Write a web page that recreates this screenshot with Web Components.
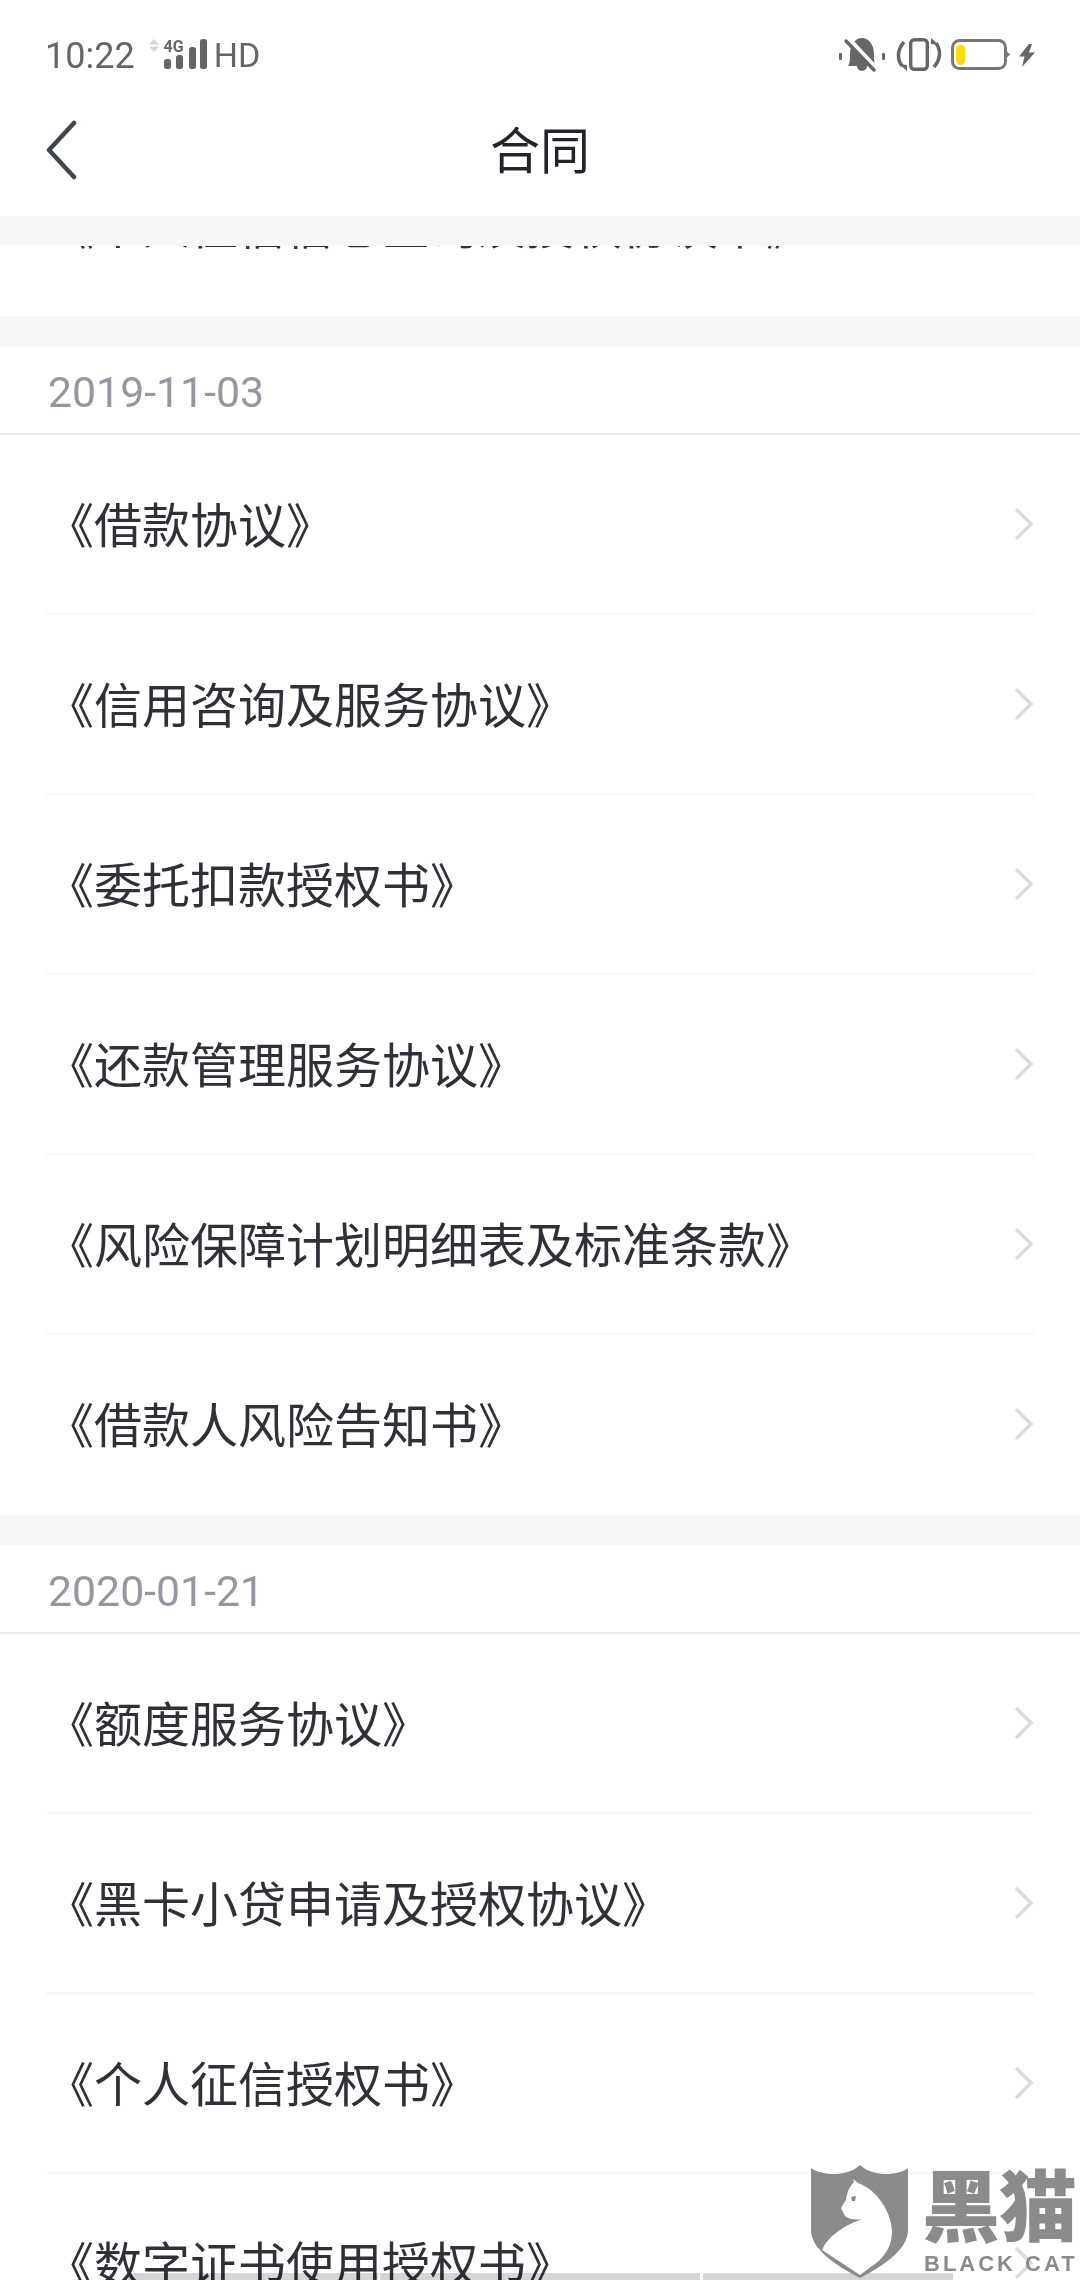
<!DOCTYPE html>
<html>
<head>
<meta charset="utf-8">
<style>
  html, body { margin: 0; padding: 0; background: #fff; }
  body { width: 1080px; height: 2280px; overflow: hidden; position: relative; }
</style>
</head>
<body>
<status-bar></status-bar>
<nav-header title="合同"></nav-header>
<contract-scroll>
  <contract-stub>《个人征信信息查询及授权协议书》</contract-stub>
  <contract-group date="2019-11-03">
    <contract-row>《借款协议》</contract-row>
    <contract-row>《信用咨询及服务协议》</contract-row>
    <contract-row>《委托扣款授权书》</contract-row>
    <contract-row>《还款管理服务协议》</contract-row>
    <contract-row>《风险保障计划明细表及标准条款》</contract-row>
    <contract-row>《借款人风险告知书》</contract-row>
  </contract-group>
  <contract-group date="2020-01-21">
    <contract-row>《额度服务协议》</contract-row>
    <contract-row>《黑卡小贷申请及授权协议》</contract-row>
    <contract-row>《个人征信授权书》</contract-row>
    <contract-row>《数字证书使用授权书》</contract-row>
  </contract-group>
</contract-scroll>
<bottom-strip></bottom-strip>
<cat-mark></cat-mark>
<script>
const SANS = `Roboto, "Noto Sans CJK SC", sans-serif`;
const CJK = `"Noto Sans CJK SC", sans-serif`;

class StatusBar extends HTMLElement {
  constructor() {
    super();
    this.attachShadow({ mode: "open" });
    this.shadowRoot.innerHTML = `
      <style>
        :host{display:flex;align-items:center;justify-content:space-between;height:108px;padding:0 45px;box-sizing:border-box;font-family:${SANS};color:#666}
        .left,.right{display:flex;align-items:center}
        .time{font-size:36px;line-height:40px;padding-top:4px}
        .hd{font-size:34px;line-height:40px;margin-left:7px;padding-top:2px}
        svg{display:block;overflow:visible}
      </style>
      <div class="left">
        <span class="time">10:22</span>
        <svg width="58" height="30" viewBox="0 0 58 30" style="margin-left:14px">
          <path d="M5 0l5 5.500H0zM5 13l5-5.500H0z" fill="#d6d6d6"/>
          <rect x="15" y="20" width="7" height="10" rx="2.500" fill="#666"/>
          <rect x="27" y="16" width="7" height="14" rx="2.500" fill="#666"/>
          <rect x="40" y="8" width="7" height="22" rx="2.500" fill="#666"/>
          <rect x="51" y="0" width="7" height="30" rx="2.500" fill="#666"/>
          <text x="14.500" y="12.500" font-family="Roboto" font-weight="700" font-size="16" fill="#666">4G</text>
        </svg>
        <span class="hd">HD</span>
      </div>
      <div class="right">
        <svg width="46" height="33" viewBox="0 0 46 33">
          <rect x="0" y="15" width="3" height="7" rx="1" fill="#666"/>
          <rect x="43" y="15" width="3" height="7" rx="1" fill="#666"/>
          <path d="M9 28c2-3 2-6 2-12C11 7 16 0 23 0s12 7 12 16c0 6 0 9 2 12z" fill="#666"/>
          <path d="M18 28a5 5 0 0 0 10 0z" fill="#666"/>
          <path d="M10 1l28 30" stroke="#fff" stroke-width="4.500"/>
          <path d="M7 3l28 29" stroke="#666" stroke-width="3.500" stroke-linecap="round"/>
        </svg>
        <svg width="44" height="33" viewBox="0 0 44 33" style="margin-left:12px">
          <rect x="13.700" y="1.700" width="16.600" height="29.600" rx="3.500" fill="none" stroke="#666" stroke-width="3.400"/>
          <path d="M7 4C0 12 0 21 5 28" fill="none" stroke="#666" stroke-width="3.500"/>
          <path d="M37 29c7-8 7-17 2-24" fill="none" stroke="#666" stroke-width="3.500"/>
          <path d="M2 26l8 1v6zM42 7l-8-1V0z" fill="#666"/>
        </svg>
        <svg width="59" height="31" viewBox="0 0 59 31" style="margin-left:10px">
          <rect x="1.500" y="1.500" width="53" height="28" rx="7" fill="none" stroke="#777" stroke-width="3"/>
          <rect x="5" y="6" width="9" height="20" rx="4.500" fill="#ffdb00"/>
          <path d="M56 12.500l3 3-3 3z" fill="#777"/>
        </svg>
        <svg width="16" height="23" viewBox="0 0 16 23" style="margin-left:9px;margin-top:2px">
          <path d="M10 0L0 12.500h5.500L3 23 16 8.500H10L13 0z" fill="#666"/>
        </svg>
      </div>
    `;
  }
}

class NavHeader extends HTMLElement {
  constructor() {
    super();
    this.attachShadow({ mode: "open" });
    this.shadowRoot.innerHTML = `
      <style>
        :host{display:block;position:relative;height:108px;font-family:${CJK}}
        .title{height:77px;display:flex;align-items:center;justify-content:center;font-size:50px;color:#23232e}
        svg{position:absolute;left:46px;top:12px}
      </style>
      <svg width="32" height="60" viewBox="0 0 32 60"><path d="M28 3L3 30l25 27" fill="none" stroke="#3f4650" stroke-width="4.500" stroke-linecap="round" stroke-linejoin="round"/></svg>
      <div class="title"></div>
    `;
    this.shadowRoot.querySelector(".title").textContent = this.getAttribute("title");
  }
}

class ContractScroll extends HTMLElement {
  constructor() {
    super();
    this.attachShadow({ mode: "open" });
    this.shadowRoot.innerHTML = `
      <style>
        :host{display:block;height:2064px;overflow:hidden;background:#f6f7f9;padding-top:30px;box-sizing:border-box}
      </style>
      <slot></slot>
    `;
  }
}

class ContractStub extends HTMLElement {
  constructor() {
    super();
    this.attachShadow({ mode: "open" });
    this.shadowRoot.innerHTML = `
      <style>
        :host{display:block;height:70px;background:#fff;overflow:hidden;position:relative}
        .txt{position:absolute;left:46px;bottom:63px;font:48px/60px ${CJK};color:#303038;white-space:nowrap}
      </style>
      <div class="txt"><slot></slot></div>
    `;
  }
}

class ContractGroup extends HTMLElement {
  constructor() {
    super();
    this.attachShadow({ mode: "open" });
    this.shadowRoot.innerHTML = `
      <style>
        :host{display:block;margin-top:30px;background:#fff}
        .date{height:89px;box-sizing:border-box;border-bottom:2px solid #eeeef0;padding:4px 0 0 48px;display:flex;align-items:center;font:42.800px/48px ${SANS};color:#9797a1}
      </style>
      <div class="date"></div>
      <slot></slot>
    `;
    this.shadowRoot.querySelector(".date").textContent = this.getAttribute("date");
  }
}

class ContractRow extends HTMLElement {
  constructor() {
    super();
    this.attachShadow({ mode: "open" });
    this.shadowRoot.innerHTML = `
      <style>
        :host{display:block;padding:0 46px}
        :host(:last-child) .row{border-bottom-color:transparent}
        .row{height:180px;box-sizing:border-box;border-bottom:2px solid #f7f7f8;display:flex;align-items:center;justify-content:space-between;font:48px/60px ${CJK};color:#303038}
        .label{padding-bottom:4px}
        svg{display:block}
      </style>
      <div class="row">
        <span class="label"><slot></slot></span>
        <svg width="20" height="34" viewBox="0 0 20 34"><path d="M2 2l15 15L2 32" fill="none" stroke="#dcdcdc" stroke-width="3.500"/></svg>
      </div>
    `;
  }
}

class BottomStrip extends HTMLElement {
  constructor() {
    super();
    this.attachShadow({ mode: "open" });
    this.shadowRoot.innerHTML = `
      <style>
        :host{display:flex;position:absolute;left:128px;bottom:0;height:7px;mix-blend-mode:multiply}
        div{height:100%;background:#d6d6d6}
      </style>
      <div style="width:250px"></div><div style="width:320px;margin-left:2px"></div><div style="width:250px;margin-left:3px"></div>
    `;
  }
}

class CatMark extends HTMLElement {
  constructor() {
    super();
    this.attachShadow({ mode: "open" });
    this.shadowRoot.innerHTML = `
      <style>
        :host{position:absolute;left:810px;top:2164px;width:270px;height:116px;display:block}
        svg{position:absolute;left:0;top:0}
        .cn{position:absolute;left:112px;top:-6px;font:900 78px/88px ${CJK};color:#8b8b8b;letter-spacing:-1px;white-space:nowrap}
        .en{position:absolute;left:114px;top:85px;font:700 22px/30px "Liberation Sans",sans-serif;color:#8b8b8b;letter-spacing:3px;white-space:nowrap}
      </style>
      <svg width="100" height="116" viewBox="0 0 100 116">
        <path d="M1 4C10 11 36 14 50 1c14 13 40 10 48 3v62c0 19-23 35-48 48C25 101 1 85 1 66z" fill="#8b8b8b"/>
        <path d="M43 15l5 4C68 26 82 50 82 68c0 16-10 28-20 34l-12 9-38-25c6-14 24-26 41-31-6 1-13 1-18-3l-4-8 5-8c1-8 4-14 8-18z" fill="#fff"/>
        <path d="M41 33l5-1-1 5h-3z" fill="#8b8b8b"/>
      </svg>
      <div class="cn">黑猫</div>
      <div class="en">BLACK CAT</div>
    `;
  }
}

customElements.define("status-bar", StatusBar);
customElements.define("nav-header", NavHeader);
customElements.define("contract-scroll", ContractScroll);
customElements.define("contract-stub", ContractStub);
customElements.define("contract-group", ContractGroup);
customElements.define("contract-row", ContractRow);
customElements.define("bottom-strip", BottomStrip);
customElements.define("cat-mark", CatMark);
</script>
</body>
</html>
